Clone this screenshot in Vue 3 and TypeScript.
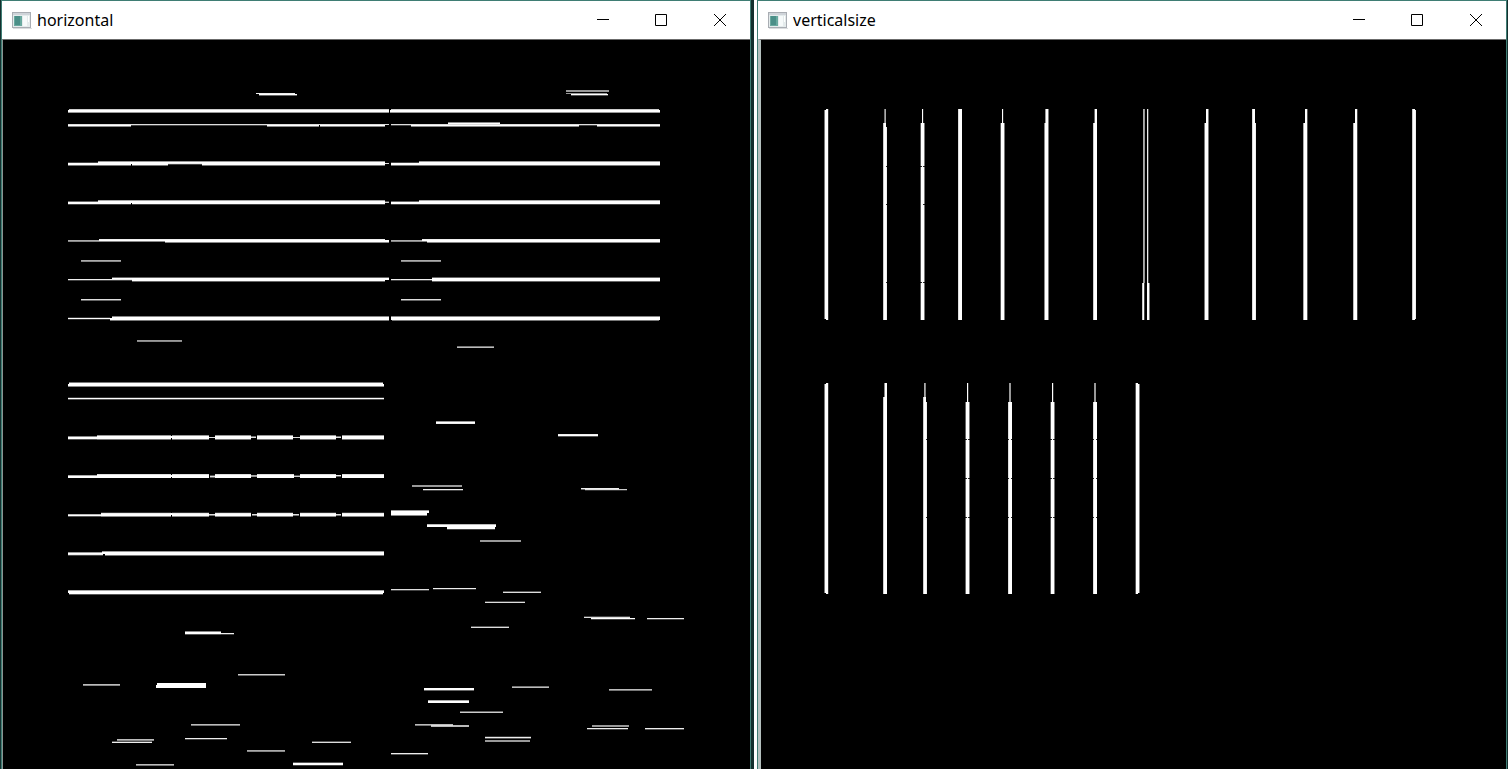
<script setup lang="ts">
import { computed } from 'vue'

// from, to: extent along the line; at: first pixel across it;
// tones: one hex brightness digit per pixel of thickness
type Stroke = [from: number, to: number, at: number, tones: string]
interface Cell { x: number; y: number; width: number; height: number; opacity: number }
interface Pane { id: string; title: string; viewBox: string; cells: Cell[]; notches: Cell[] }

const horizontal: Stroke[] = [
  [256, 295, 93, 'e'], [259, 297, 94, 'f6'], [566, 609, 90, '99'], [566, 607, 93, '9'], [571, 608, 94, 'f5'],
  [69, 389, 109, 'c'], [68, 389, 110, 'ff9'], [391, 659, 109, 'c'], [390, 660, 110, 'ff9'],
  [68, 131, 124, 'df8'], [131, 267, 124, 'd4'], [267, 319, 124, 'df8'], [319, 320, 124, 'd'], [320, 385, 124, 'df8'], [385, 389, 124, 'd'],
  [391, 411, 124, 'd4'], [411, 579, 124, 'df8'], [448, 500, 122, '8f'], [579, 597, 124, 'd4'], [597, 660, 124, 'df8'],
  [68, 98, 162, '4ff7'], [98, 131, 161, '9fff7'], [131, 132, 161, '9ff'], [132, 168, 161, '9fff7'], [168, 202, 161, '9fe4'], [202, 385, 161, '9fff7'], [385, 389, 163, 'd'],
  [391, 419, 162, '4ff7'], [419, 660, 161, '9fff7'],
  [68, 98, 201, '6ff4'], [98, 131, 200, 'afff4'], [131, 132, 200, 'aff'], [132, 385, 200, 'afff4'], [385, 389, 201, '5c'],
  [391, 419, 201, '6ff4'], [419, 660, 200, 'afff4'],
  [68, 99, 240, 'a8'], [99, 165, 239, 'ef8'], [165, 385, 239, 'eff8'], [385, 389, 240, 'ff8'],
  [391, 422, 240, 'a8'], [422, 427, 239, 'ef8'], [427, 660, 239, 'eff8'],
  [81, 121, 260, 'a8'], [401, 441, 260, 'a8'],
  [68, 112, 279, 'e4'], [112, 132, 277, '6fe4'], [132, 385, 277, '6fff6'], [385, 389, 277, '6ff'],
  [391, 432, 279, 'e4'], [432, 660, 277, '6fff6'],
  [81, 121, 299, 'd6'], [401, 441, 299, 'd6'],
  [68, 110, 317, '3f3'], [112, 389, 316, '8f'], [110, 389, 318, 'ff7'], [391, 660, 316, '8fff'], [392, 659, 320, '7'],
  [137, 182, 340, '98'], [457, 494, 346, '7b'],
  [69, 383, 382, '7f'], [68, 384, 384, 'ff8'], [68, 384, 397, '3f5'],
  [68, 97, 436, '8ff5'], [97, 171, 435, '9fff7'], [171, 172, 436, 'ff'], [172, 209, 435, '9fff7'], [209, 215, 437, 'd'],
  [215, 251, 435, '9fff7'], [251, 256, 436, '7d'], [257, 293, 435, '9fff7'], [293, 300, 437, 'd'], [300, 336, 435, '9fff7'], [336, 341, 436, '7d'], [342, 384, 435, '9fff7'],
  [68, 97, 475, 'aff'], [97, 171, 474, 'dfff'], [171, 172, 475, 'ff'], [172, 209, 474, 'dfff'], [210, 215, 475, '5d6'],
  [215, 251, 474, 'dfff'], [251, 257, 475, 'a9'], [257, 294, 474, 'dfff'], [294, 300, 475, '5c'], [300, 336, 474, 'dfff'], [336, 341, 475, 'e6'], [342, 384, 474, 'dfff'],
  [68, 101, 514, 'bf5'], [101, 171, 512, '3eff8'], [171, 172, 513, 'ff'], [172, 209, 512, '3eff8'], [209, 215, 514, 'd7'],
  [215, 251, 512, '3eff8'], [252, 257, 514, 'd7'], [257, 293, 512, '3eff8'], [293, 299, 514, 'd7'], [300, 336, 512, '3eff8'], [336, 341, 514, 'd7'], [342, 384, 512, '3eff8'],
  [68, 103, 552, '9fe4'], [102, 105, 551, '9ff'], [105, 384, 551, '9fff7'],
  [68, 384, 590, 'aff'], [69, 383, 593, 'f5'],
  [436, 475, 421, '9fe'], [558, 598, 434, 'ef5'], [412, 462, 485, '99'], [423, 463, 489, 'e4'],
  [581, 619, 488, 'e6'], [585, 627, 489, 'c3'],
  [391, 429, 510, '9ff'], [391, 427, 513, 'ff8'], [427, 496, 524, 'bff'], [447, 495, 527, 'ff4'],
  [480, 521, 540, '99'], [391, 429, 589, 'd4'], [433, 476, 588, 'e3'], [503, 541, 591, '5d'], [485, 525, 601, '4d'],
  [584, 630, 616, '4d'], [591, 635, 618, 'f4'], [647, 684, 618, 'e4'], [471, 509, 626, '5d'],
  [185, 221, 631, '8ff5'], [221, 234, 633, 'e4'], [83, 120, 684, 'b8'], [238, 285, 674, 'c6'],
  [157, 206, 683, 'ff'], [156, 206, 685, 'fff'], [191, 240, 724, 'b7'], [185, 227, 738, 'e4'],
  [117, 154, 739, 'b8'], [112, 152, 741, '5e'], [312, 351, 741, '5d'], [247, 285, 750, 'a8'],
  [136, 174, 764, 'b7'], [293, 343, 762, '5ff4'],
  [424, 474, 688, 'ff6'], [428, 469, 700, 'aff'], [512, 549, 686, '7b'], [609, 652, 689, 'b7'],
  [460, 503, 711, '6c'], [415, 453, 724, 'b7'], [431, 469, 725, 'bb'], [592, 629, 725, '99'],
  [587, 628, 728, 'e4'], [645, 684, 728, 'e5'], [485, 531, 736, '3e5'], [485, 530, 740, '99'], [391, 428, 753, 'e5'],
]

const vertical: Stroke[] = [
  [110, 319, 824, '7f'], [109, 320, 826, 'ff3'],
  [109, 123, 884, '7a'], [123, 320, 883, 'cff'], [127, 320, 886, 'e'],
  [109, 123, 922, 'f2'], [123, 320, 920, '5fff7'],
  [109, 320, 958, 'dfff'],
  [109, 123, 1002, 'f2'], [123, 320, 1000, '5fff7'],
  [109, 320, 1045, '9ff7'], [123, 320, 1044, '8ff'],
  [109, 123, 1094, '6ff'], [123, 320, 1093, 'cfff'],
  [109, 283, 1143, 'a9'], [109, 283, 1147, 'e4'], [283, 320, 1142, 'cf4'], [283, 320, 1147, 'ff7'],
  [109, 320, 1206, 'ff7'], [123, 320, 1204, '7f'],
  [109, 320, 1252, 'dff'], [123, 320, 1255, 'e'],
  [109, 320, 1305, 'ff5'], [123, 320, 1303, 'af'],
  [109, 320, 1355, 'ff4'], [123, 320, 1353, 'bf'],
  [109, 320, 1412, 'cff'], [110, 319, 1415, 'e'],
  [384, 593, 824, '7f'], [383, 594, 826, 'ff3'],
  [383, 594, 884, '8ff'], [397, 594, 883, 'cf'],
  [383, 402, 924, 'a8'], [397, 594, 923, 'cff'], [402, 594, 926, 'e'],
  [383, 402, 967, 'f3'], [402, 594, 965, '6fff7'],
  [383, 402, 1009, '99'], [402, 594, 1008, 'dfff'],
  [383, 402, 1052, 'f3'], [402, 594, 1050, '5fff7'],
  [383, 402, 1094, '99'], [402, 594, 1093, 'dfff'],
  [383, 594, 1135, '5ff'], [384, 593, 1138, 'f7'],
]

// one-pixel nicks in the edges of the vertical rules: [x, y, width]
const nicks: [number, number, number][] = [
  [886, 166, 1], [886, 204, 1], [886, 282, 1],
  [920, 166, 2], [923, 166, 2], [923, 204, 2], [920, 282, 2], [923, 282, 2],
  [926, 439, 1], [926, 517, 1],
  ...[439, 478, 517].flatMap((y) =>
    [965, 1008, 1050, 1093].flatMap((x): [number, number, number][] => {
      const edge = x === 965 || x === 1050 ? 2 : 1
      return [[x, y, edge], [x + 3, y, edge]]
    })),
]

function toCells(strokes: Stroke[], upright: boolean): Cell[] {
  return strokes.flatMap(([from, to, at, tones]) =>
    [...tones].map((tone, i) => {
      const opacity = parseInt(tone, 16) / 15
      return upright
        ? { x: at + i, y: from, width: 1, height: to - from, opacity }
        : { x: from, y: at + i, width: to - from, height: 1, opacity }
    }))
}

const panes = computed<Pane[]>(() => [
  { id: 'horizontal', title: 'horizontal', viewBox: '3 40 747 729', cells: toCells(horizontal, false), notches: [] },
  {
    id: 'verticalsize', title: 'verticalsize', viewBox: '761 40 745 729', cells: toCells(vertical, true),
    notches: nicks.map(([x, y, width]) => ({ x, y, width, height: 1, opacity: 0.85 })),
  },
])
</script>

<template>
  <main class="desktop">
    <section v-for="pane in panes" :key="pane.id" class="window" :class="pane.id" :aria-label="pane.title">
      <header class="titlebar">
        <svg class="app-icon" viewBox="0 0 20 17" width="20" height="17" aria-hidden="true">
          <rect x="0" y="0" width="19" height="16" fill="#a9adb3" />
          <rect x="1" y="1" width="17" height="2" fill="#cfd4d9" />
          <rect x="1" y="3" width="17" height="12" fill="#e4ebec" />
          <rect x="2" y="4" width="8" height="10" fill="#69a99f" />
          <rect x="3" y="4" width="5" height="9" fill="#4b8f88" />
          <rect x="11" y="4" width="4" height="10" fill="#f6fafa" />
          <rect x="16" y="4" width="1" height="6" fill="#ffffff" />
          <rect x="1" y="16" width="19" height="1" fill="#dadddf" />
        </svg>
        <h1 class="title">{{ pane.title }}</h1>
        <div class="controls">
          <button type="button" class="control" aria-label="Minimize">
            <svg viewBox="0 0 12 12" width="12" height="12"><path d="M0 5.5H12" /></svg>
          </button>
          <button type="button" class="control" aria-label="Maximize">
            <svg viewBox="0 0 12 12" width="12" height="12"><path d="M.5 .5H11.5V11.5H.5Z" /></svg>
          </button>
          <button type="button" class="control close" aria-label="Close">
            <svg viewBox="0 0 12 12" width="12" height="12"><path d="M0 0L12 12M12 0L0 12" /></svg>
          </button>
        </div>
      </header>
      <div class="canvas">
        <svg class="drawing" :viewBox="pane.viewBox" role="img" :aria-label="pane.title" shape-rendering="crispEdges">
          <rect v-for="(c, i) in pane.cells" :key="i" :x="c.x" :y="c.y" :width="c.width" :height="c.height" :fill-opacity="c.opacity" fill="#fff" />
          <rect v-for="(c, i) in pane.notches" :key="'n' + i" :x="c.x" :y="c.y" :width="c.width" :height="c.height" :fill-opacity="c.opacity" fill="#000" />
        </svg>
      </div>
    </section>
  </main>
</template>

<style>
body {
  margin: 0;
  background: #14302e;
}
</style>

<style scoped>
.desktop {
  display: flex;
  min-height: 100vh;
  box-sizing: border-box;
  padding: 0 1px;
  background: #14302e;
}

.window {
  flex: 1 1 0;
  min-width: 0;
  display: flex;
  flex-direction: column;
  border: 1px solid #3f7d74;
  border-bottom: 0;
  background: #fff;
}

.window + .window {
  margin-left: 3px;
  box-shadow: -3px 0 0 #fff;
}

.horizontal {
  margin-right: 3px;
}

.titlebar {
  display: flex;
  align-items: center;
  height: 38px;
  padding-left: 10px;
  background: #fff;
}

.app-icon {
  flex: none;
}

.title {
  flex: 1;
  min-width: 0;
  margin: 0 0 0 5px;
  overflow: hidden;
  white-space: nowrap;
  color: #000;
  font: 400 16px/24px "Noto Sans", "Open Sans", sans-serif;
}

.controls {
  display: flex;
  height: 100%;
}

.control {
  display: grid;
  place-items: center;
  width: 58px;
  padding: 0;
  border: 0;
  background: transparent;
}

.control.close {
  width: 60px;
}

.control:hover {
  background: #e5e5e5;
}

.control path {
  fill: none;
  stroke: #000;
  stroke-width: 1;
}

.canvas {
  flex: 1;
  border-top: 1px solid #6b6b6b;
  border-left: 1px solid #8a9492;
  background: #000;
}

.verticalsize .canvas {
  border-left: 3px solid #b4c0be;
}

.drawing {
  display: block;
  width: 100%;
  height: auto;
}
</style>
